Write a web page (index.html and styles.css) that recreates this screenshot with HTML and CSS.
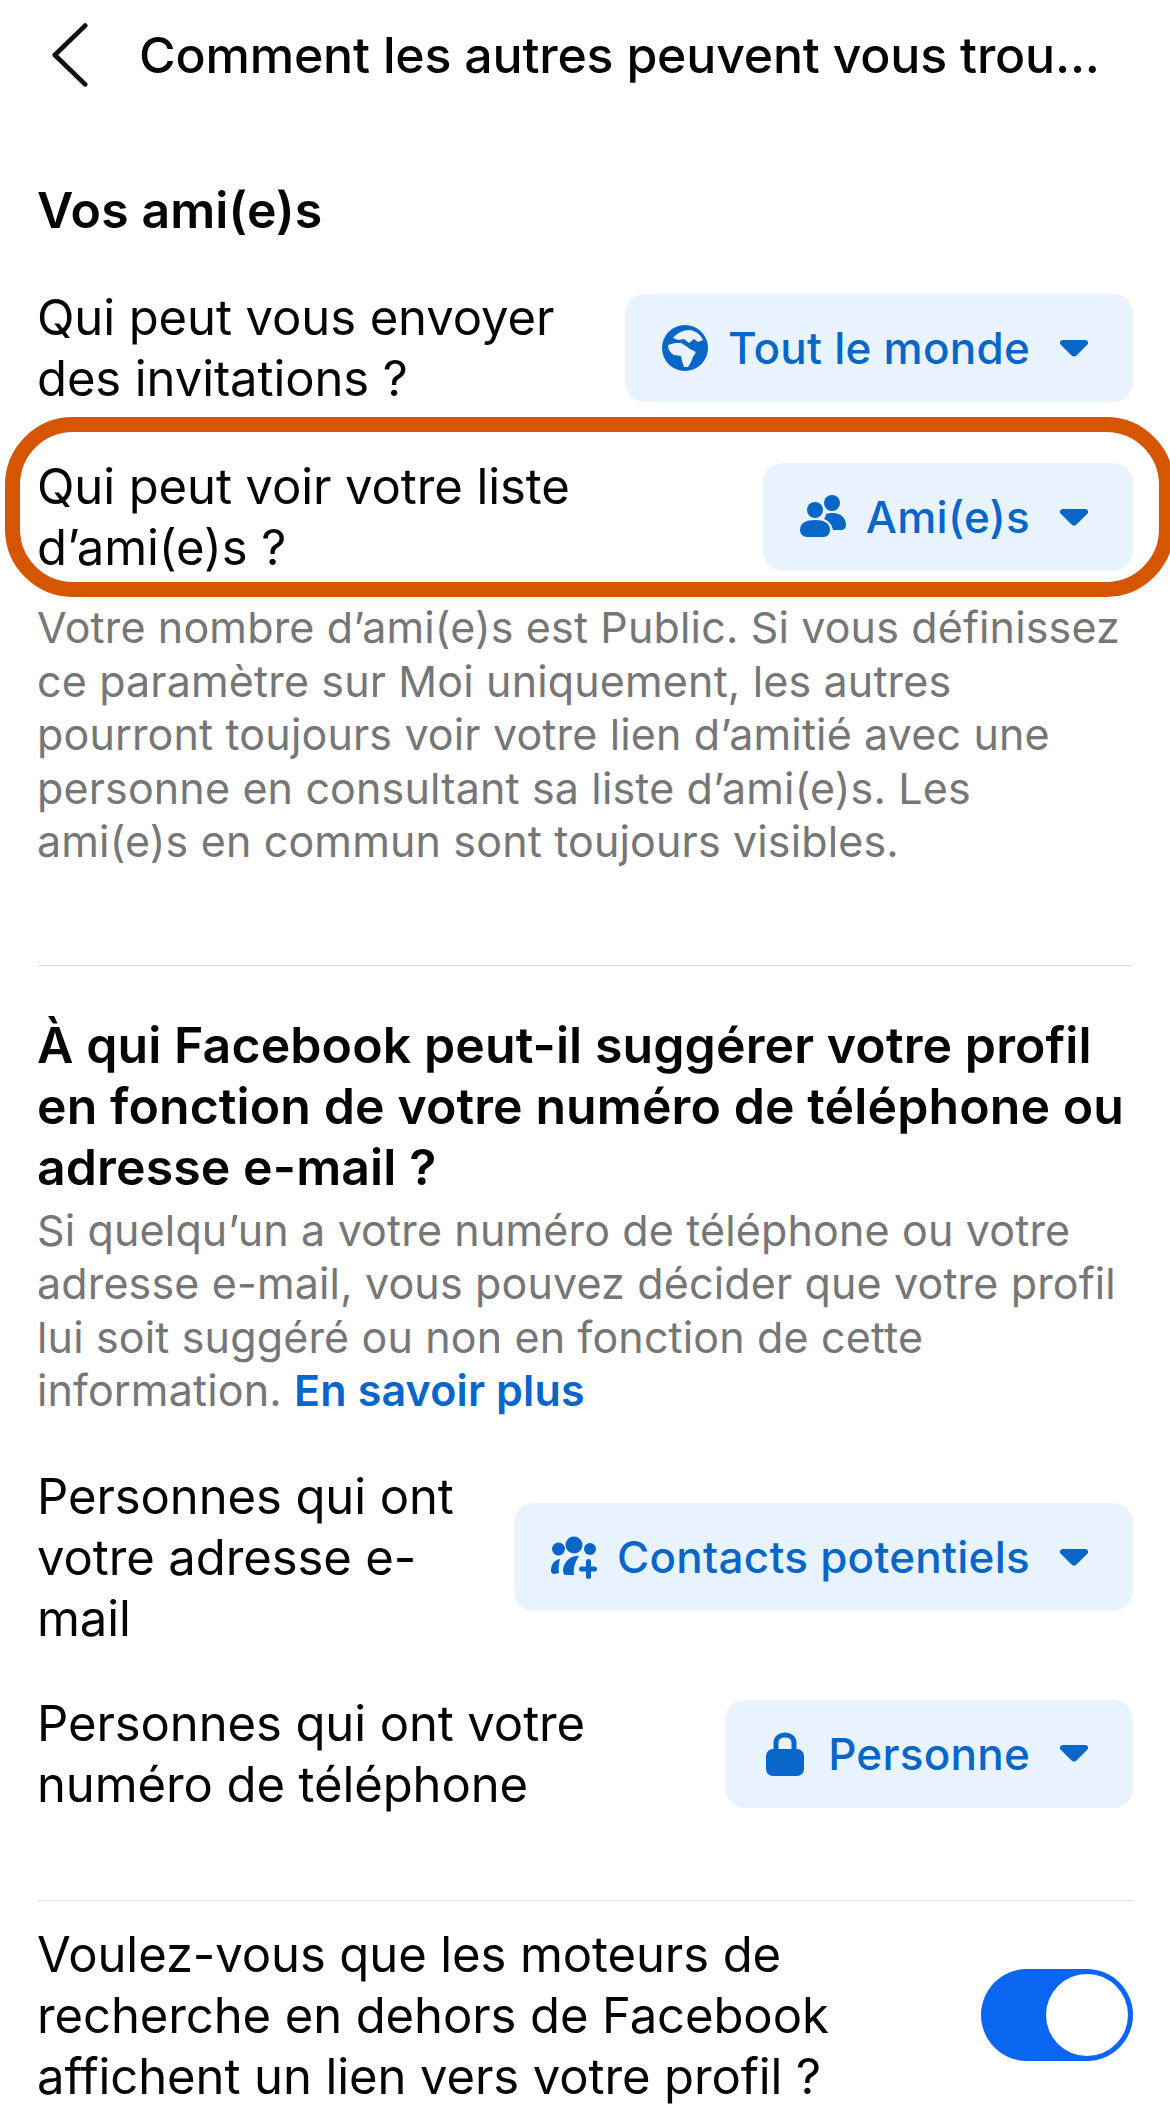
FILE: index.html
```html
<!DOCTYPE html>
<html lang="fr">
<head>
    <meta charset="UTF-8">
    <meta name="viewport" content="width=device-width, initial-scale=1.0">
    <title>Comment les autres peuvent vous trouver</title>
    <link rel="stylesheet" href="styles.css">
</head>
<body>

    <!-- Header -->
    <header class="topbar">
        <svg class="back" viewBox="0 0 38 68" aria-hidden="true"><path d="M35 3 3 34l32 31"/></svg>
        <h1>Comment les autres peuvent vous trou...</h1>
    </header>

    <main class="content">
        <h2 class="friends-title">Vos ami(e)s</h2>

        <div class="row">
            <p class="label">Qui peut vous envoyer<br>des invitations ?</p>
            <button class="picker">
                <svg class="icon" viewBox="0 0 46 46" aria-hidden="true">
                    <circle cx="23" cy="23" r="23"/>
                    <path class="land" d="M11 13C15 8 21 5 28 5c6 1 11 5 13 10l-5 2-4-3-5 4-5-4-6 1z"/>
                    <path class="land" d="M6 20l7-2h6l5 3 4 3 6 3-3 5-2 5-3 5h-4l-2-6-1-5-7-1c-4-2-6-6-6-10z"/>
                </svg>
                <span>Tout le monde</span>
                <svg class="caret" viewBox="0 0 28 17" aria-hidden="true"><path d="M3 0h22c3 0 4 3 2 5L17 15c-2 2-4 2-6 0L1 5C-1 3 0 0 3 0z"/></svg>
            </button>
        </div>

        <div class="row row-marked">
            <p class="label">Qui peut voir votre liste<br>d’ami(e)s ?</p>
            <button class="picker">
                <svg class="icon" viewBox="0 0 46 46" aria-hidden="true">
                    <circle cx="32" cy="9" r="8"/>
                    <circle cx="15" cy="16" r="8"/>
                    <path d="M0 36c0-7 6-10 15-10s15 3 15 10c0 4-3 7-6 7H7c-4 0-7-3-7-7z"/>
                    <path d="M26 20c2-1 4-1 7-1 8 0 13 5 13 12 0 3-2 5-5 5h-8c-1-5-4-9-9-11 1-2 2-3 2-5z"/>
                </svg>
                <span>Ami(e)s</span>
                <svg class="caret" viewBox="0 0 28 17" aria-hidden="true"><path d="M3 0h22c3 0 4 3 2 5L17 15c-2 2-4 2-6 0L1 5C-1 3 0 0 3 0z"/></svg>
            </button>
            <div class="highlight"></div>
        </div>

        <p class="note note-friends">Votre nombre d’ami(e)s est Public. Si vous définissez<br>ce paramètre sur Moi uniquement, les autres<br>pourront toujours voir votre lien d’amitié avec une<br>personne en consultant sa liste d’ami(e)s. Les<br>ami(e)s en commun sont toujours visibles.</p>

        <hr class="divider divider-first">

        <h2 class="suggest-title">À qui Facebook peut-il suggérer votre profil<br>en fonction de votre numéro de téléphone ou<br>adresse e-mail ?</h2>
        <p class="note note-suggest">Si quelqu’un a votre numéro de téléphone ou votre<br>adresse e-mail, vous pouvez décider que votre profil<br>lui soit suggéré ou non en fonction de cette<br>information. <a href="#">En savoir plus</a></p>

        <div class="row row-tight">
            <p class="label">Personnes qui ont<br>votre adresse e-<br>mail</p>
            <button class="picker">
                <svg class="icon" viewBox="0 0 46 46" aria-hidden="true">
                    <circle cx="23" cy="11" r="8.5"/>
                    <circle cx="7.5" cy="15" r="6.5"/>
                    <circle cx="39" cy="15" r="6"/>
                    <path d="M28 22c-8-1-15 5-16 14 0 3 1 5 3 5h8c-1-6 1-13 5-19z"/>
                    <path d="M9 25c-6 1-9 6-9 11 0 3 1 4 3 4l5-1c-1-5 0-9 1-14z"/>
                    <rect x="35" y="25" width="5" height="20" rx="2.5"/>
                    <rect x="28" y="32.5" width="18" height="5" rx="2.5"/>
                </svg>
                <span>Contacts potentiels</span>
                <svg class="caret" viewBox="0 0 28 17" aria-hidden="true"><path d="M3 0h22c3 0 4 3 2 5L17 15c-2 2-4 2-6 0L1 5C-1 3 0 0 3 0z"/></svg>
            </button>
        </div>

        <div class="row">
            <p class="label">Personnes qui ont votre<br>numéro de téléphone</p>
            <button class="picker">
                <svg class="icon" viewBox="0 0 46 46" aria-hidden="true">
                    <path class="shackle" d="M14 22v-10c0-5 4-8 9-8s9 3 9 8v10"/>
                    <rect x="4" y="18" width="38" height="27" rx="7"/>
                </svg>
                <span>Personne</span>
                <svg class="caret" viewBox="0 0 28 17" aria-hidden="true"><path d="M3 0h22c3 0 4 3 2 5L17 15c-2 2-4 2-6 0L1 5C-1 3 0 0 3 0z"/></svg>
            </button>
        </div>

        <hr class="divider divider-last">

        <div class="row">
            <p class="label">Voulez-vous que les moteurs de<br>recherche en dehors de Facebook<br>affichent un lien vers votre profil ?</p>
            <div class="toggle"><div class="knob"></div></div>
        </div>
    </main>

</body>
</html>
```

FILE: styles.css
```css
html, body {
    margin: 0;
    padding: 0;
    background: #fff;
    overflow: hidden;
}
body {
    font-family: Inter, "Liberation Sans", sans-serif;
    color: #050505;
    height: 2123px;
}
.topbar {
    display: flex;
    align-items: center;
    height: 110px;
    padding-left: 52px;
}
.back {
    width: 36px;
    height: 66px;
    margin-right: 51px;
    fill: none;
    stroke: #111;
    stroke-width: 5;
    stroke-linecap: round;
    stroke-linejoin: round;
}
.topbar h1 {
    margin: 0;
    font-size: 50px;
    font-weight: 500;
    letter-spacing: -0.2px;
    white-space: nowrap;
}
.content {
    padding: 70px 37px 0;
}
.friends-title, .suggest-title {
    margin: 0;
    font-size: 50px;
    line-height: 61px;
    font-weight: 600;
    letter-spacing: 0.1px;
}
.friends-title {
    margin-bottom: 46px;
}
.row {
    position: relative;
    display: flex;
    align-items: center;
    justify-content: space-between;
    margin-bottom: 47px;
}
.row-marked {
    margin-bottom: 23px;
}
.row-tight {
    margin-bottom: 44px;
}
.label {
    margin: 0;
    font-size: 49px;
    line-height: 61px;
    letter-spacing: -0.1px;
    white-space: nowrap;
}
.picker {
    display: flex;
    align-items: center;
    height: 108px;
    padding: 0 45px 0 37px;
    border: none;
    border-radius: 20px;
    background: #e9f3fd;
    color: #0866c9;
    font-family: inherit;
    font-size: 44px;
    font-weight: 500;
    letter-spacing: 0.25px;
}
.icon {
    width: 46px;
    height: 46px;
    margin-right: 20px;
    fill: #0866c9;
}
.land {
    fill: #e9f3fd;
}
.shackle {
    fill: none;
    stroke: #0866c9;
    stroke-width: 5;
}
.caret {
    width: 28px;
    height: 17px;
    margin-left: 30px;
    fill: #0866c9;
}
.highlight {
    position: absolute;
    top: -39px;
    bottom: -19px;
    left: -32px;
    right: -41px;
    border: 15px solid #d65500;
    border-radius: 68px;
    pointer-events: none;
}
.note {
    margin: 0;
    font-size: 43px;
    line-height: 53.5px;
    color: #767676;
    letter-spacing: 0.15px;
    white-space: nowrap;
}
.note a {
    color: #0866c9;
    font-weight: 600;
    text-decoration: none;
}
.note-suggest {
    margin: 6px 0 48px;
}
.divider {
    height: 1px;
    border: none;
    background: #dedede;
    margin: 0;
}
.divider-first {
    margin: 96px 0 49px;
}
.divider-last {
    margin: 85px 0 23px;
}
.toggle {
    box-sizing: border-box;
    display: flex;
    justify-content: flex-end;
    width: 152px;
    height: 92px;
    padding: 5px;
    border-radius: 46px;
    background: #0a66f0;
}
.knob {
    width: 82px;
    height: 82px;
    border-radius: 50%;
    background: #fff;
}
```
